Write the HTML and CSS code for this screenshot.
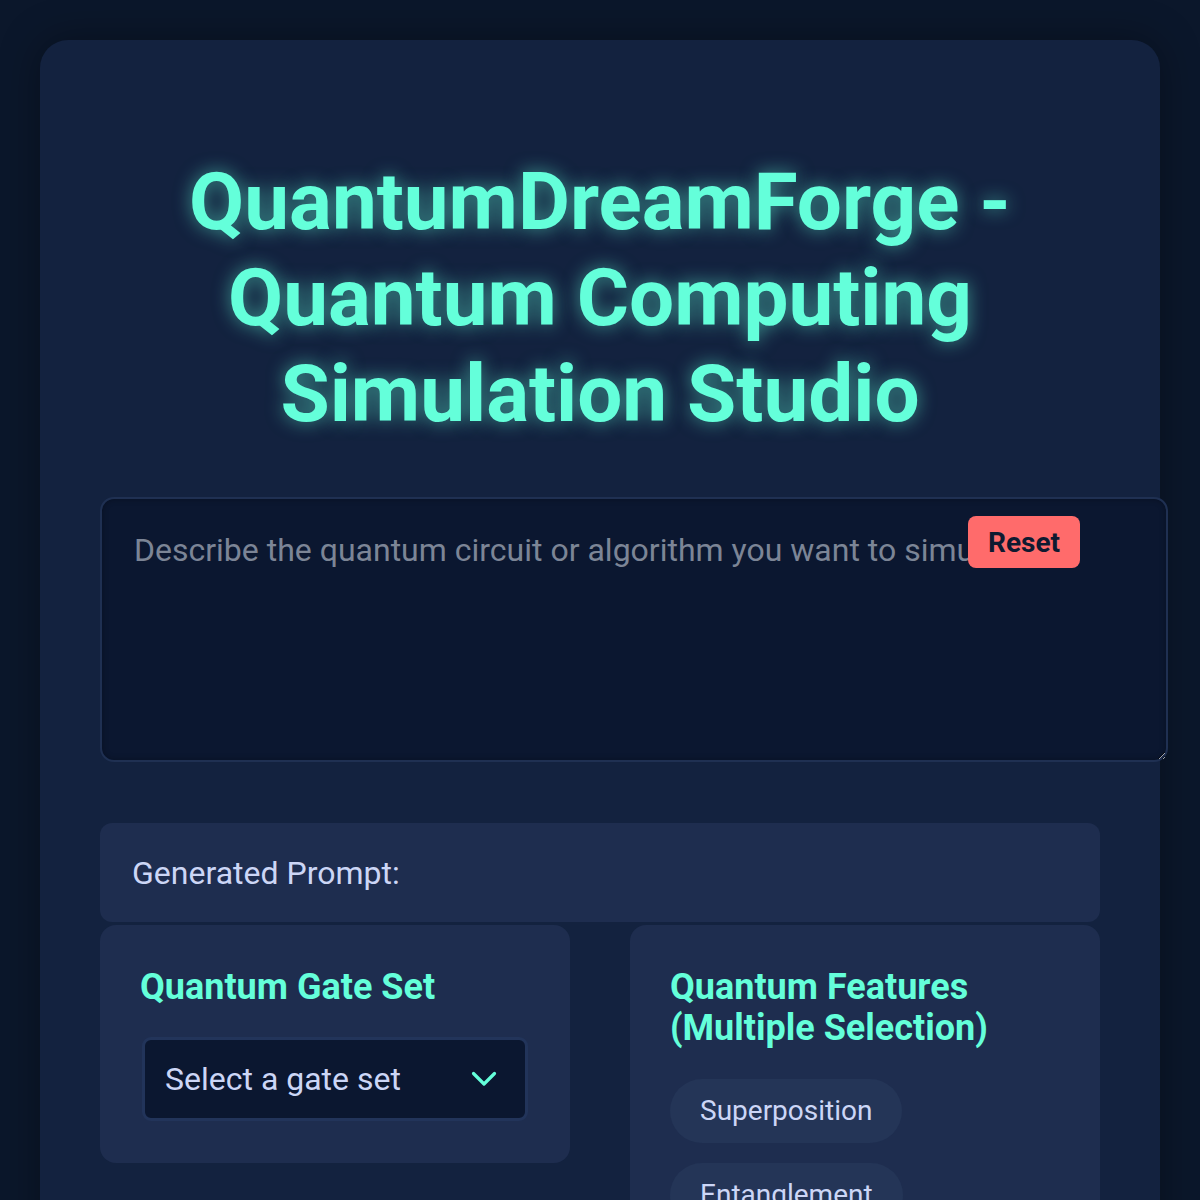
FILE: index.html
```html
<!DOCTYPE html>
<html lang="en">
<head>
<meta charset="utf-8">
<title>QuantumDreamForge</title>
<link rel="stylesheet" href="styles.css">
</head>
<body>
<main class="studio">
  <h1 class="title">QuantumDreamForge - Quantum Computing Simulation Studio</h1>
  <div class="input-wrap">
    <textarea class="prompt-input" placeholder="Describe the quantum circuit or algorithm you want to simulate..."></textarea>
    <button class="reset-btn" type="button">Reset</button>
  </div>
  <div class="generated">Generated Prompt:</div>
  <div class="options">
    <section class="card">
      <h2 class="card-title">Quantum Gate Set</h2>
      <div class="select">
        <span class="select-text">Select a gate set</span>
        <svg class="chevron" width="26" height="16" viewBox="0 0 26 16" fill="none"><path d="M2.5 2.5 L13 13 L23.5 2.5" stroke="#64ffda" stroke-width="3.2" stroke-linecap="round" stroke-linejoin="round"/></svg>
      </div>
    </section>
    <section class="card">
      <h2 class="card-title">Quantum Features (Multiple Selection)</h2>
      <div class="chips">
        <span class="chip">Superposition</span>
        <span class="chip">Entanglement</span>
        <span class="chip">Interference</span>
      </div>
    </section>
  </div>
</main>
</body>
</html>
```

FILE: styles.css
```css
html, body {
  margin: 0;
  padding: 0;
}
body {
  background: #0b172b;
  font-family: Roboto, "Liberation Sans", sans-serif;
  color: #ccd6f6;
  padding: 40px;
  height: 1200px;
  box-sizing: border-box;
  overflow: hidden;
}
.studio {
  background: #13223f;
  border-radius: 28px;
  padding: 60px;
  box-shadow: 0 0 40px rgba(0, 0, 0, 0.35);
  min-height: 1200px;
}
.title {
  font-size: 80px;
  line-height: 1.2;
  font-weight: 700;
  text-align: center;
  color: #64ffda;
  text-shadow: 0 0 18px rgba(100, 255, 218, 0.55);
  margin: 53.6px 0 55.6px;
}
.input-wrap {
  position: relative;
  margin-bottom: 61px;
}
.prompt-input {
  display: block;
  width: 1000px;
  height: 197px;
  padding: 32px;
  border: 2px solid #1f3052;
  border-radius: 14px;
  background: #0b1730;
  color: #ccd6f6;
  font-family: Roboto, "Liberation Sans", sans-serif;
  font-size: 32px;
  line-height: 1.2;
  box-shadow: inset 0 0 6px rgba(0,0,0,0.3);
  outline: none;
}
.prompt-input::placeholder {
  color: #7c8596;
}
.reset-btn {
  position: absolute;
  top: 19px;
  right: 20px;
  width: 112px;
  height: 52px;
  border: none;
  border-radius: 8px;
  background: #ff6b6b;
  color: #0f1a30;
  font-family: Roboto, "Liberation Sans", sans-serif;
  font-weight: 700;
  font-size: 28px;
  padding: 0;
}
.generated {
  background: #1e2d4f;
  border-radius: 12px;
  padding: 31px 32px 30px;
  font-size: 32px;
  line-height: 38px;
  color: #ccd6f6;
  margin-bottom: 3px;
}
.options {
  display: grid;
  grid-template-columns: 1fr 1fr;
  gap: 60px;
  align-items: start;
}
.card {
  background: #1e2d4f;
  border-radius: 16px;
  padding: 42px 40px 42px;
}
.card-title {
  margin: 0;
  font-size: 36px;
  line-height: 41px;
  font-weight: 700;
  color: #64ffda;
}
.select {
  margin-top: 29px;
  display: flex;
  align-items: center;
  justify-content: space-between;
  height: 84px;
  padding: 0 28px 0 20px;
  background: #0b1730;
  border: 3px solid #22345a;
  border-radius: 9px;
  box-sizing: border-box;
  margin-left: 2px;
  margin-right: 2px;
}
.select-text {
  font-size: 32px;
  color: #ccd6f6;
}
.chips {
  margin-top: 30px;
  display: flex;
  flex-direction: column;
  align-items: flex-start;
  gap: 20px;
}
.chip {
  background: #243557;
  border-radius: 32px;
  padding: 16px 30px;
  font-size: 28px;
  line-height: 32px;
  color: #ccd6f6;
}
```
